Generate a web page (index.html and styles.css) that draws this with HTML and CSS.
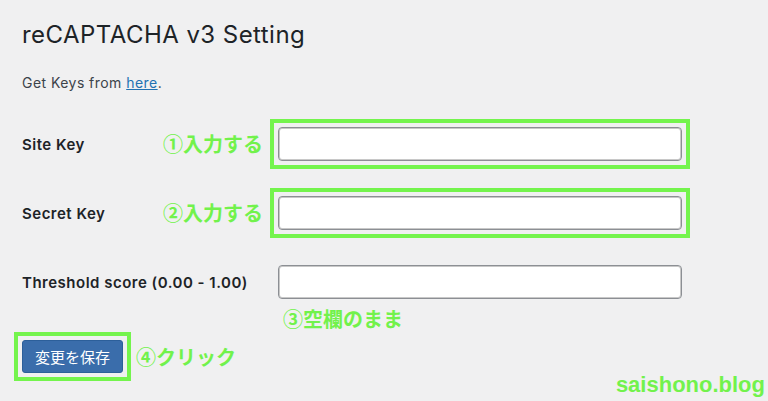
FILE: index.html
```html
<!DOCTYPE html>
<html lang="ja">
<head>
<meta charset="utf-8">
<link rel="stylesheet" href="styles.css">
</head>
<body>
<div class="wrap">
  <h1 class="title">reCAPTACHA v3 Setting</h1>
  <p class="intro">Get Keys from <a href="#" class="link">here</a>.</p>
  <div class="row">
    <label class="label">Site Key</label>
    <span class="note">①入力する</span>
    <div class="hl"><input class="field" type="text"></div>
  </div>
  <div class="row">
    <label class="label">Secret Key</label>
    <span class="note">②入力する</span>
    <div class="hl"><input class="field" type="text"></div>
  </div>
  <div class="row">
    <label class="label">Threshold score (0.00 - 1.00)</label>
    <span class="note"></span>
    <div class="hl plain"><input class="field" type="text"></div>
  </div>
  <div class="note under">③空欄のまま</div>
  <div class="submit-row">
    <div class="hl btn-hl"><button class="btn" type="button">変更を保存</button></div>
    <span class="note click">④クリック</span>
  </div>
  <div class="brand">saishono.blog</div>
</div>
</body>
</html>
```

FILE: styles.css
```css
html, body {
  margin: 0;
  padding: 0;
  background: #f0f0f1;
  height: 100%;
}
body {
  font-family: Inter, "Liberation Sans", "Noto Sans CJK JP", sans-serif;
  color: #1d2327;
  overflow: hidden;
}
.wrap {
  padding: 20px 0 0 22px;
  position: relative;
  height: 401px;
  box-sizing: border-box;
}
.title {
  margin: 0;
  font-size: 24px;
  font-weight: 400;
  line-height: 30px;
  letter-spacing: 0.45px;
  color: #1d2327;
}
.intro {
  margin: 23px 0 0;
  font-size: 14px;
  line-height: 20px;
  letter-spacing: 0.45px;
  color: #3c434a;
}
.link {
  color: #2271b1;
  text-decoration: underline;
}
.row {
  display: flex;
  align-items: center;
  height: 50px;
  margin-top: 19px;
}
.intro + .row { margin-top: 26px; }
.label {
  width: 141px;
  flex: none;
  white-space: nowrap;
  font-size: 15px;
  font-weight: 600;
  letter-spacing: 0.5px;
  color: #1d2327;
}
.note {
  font-family: "Noto Sans CJK JP", sans-serif;
  font-size: 20px;
  font-weight: 700;
  color: #72f24c;
  line-height: 24px;
}
.row .note {
  width: 107px;
  flex: none;
}
.hl {
  border: 4px solid #74f44d;
  padding: 4px;
  display: flex;
}
.hl.plain {
  border-color: transparent;
}
.field {
  width: 404px;
  height: 34px;
  box-sizing: border-box;
  margin: 0;
  border: 1px solid #8c8f94;
  border-radius: 4px;
  background: #fff;
  box-shadow: inset 0 0 0 1px #c8c8c8;
  padding: 0 8px;
}
.under {
  margin: 0 0 0 261px;
  height: 24px;
  line-height: 24px;
}
.submit-row {
  display: flex;
  align-items: center;
  margin: 1px 0 0 -8px;
}
.btn-hl {
  width: 101px;
}
.btn {
  width: 101px;
  height: 33px;
  margin: 0;
  border: 1px solid #2c5f9a;
  border-radius: 3px;
  background: #3a6dab;
  color: #fff;
  font-family: "Noto Sans CJK JP", sans-serif;
  font-size: 15px;
  padding: 0;
}
.click {
  margin-left: 5px;
}
.brand {
  position: absolute;
  right: 3px;
  bottom: 4px;
  font-family: "Liberation Sans", sans-serif;
  font-size: 22px;
  font-weight: 700;
  color: #72f24c;
  line-height: 24px;
}
```
